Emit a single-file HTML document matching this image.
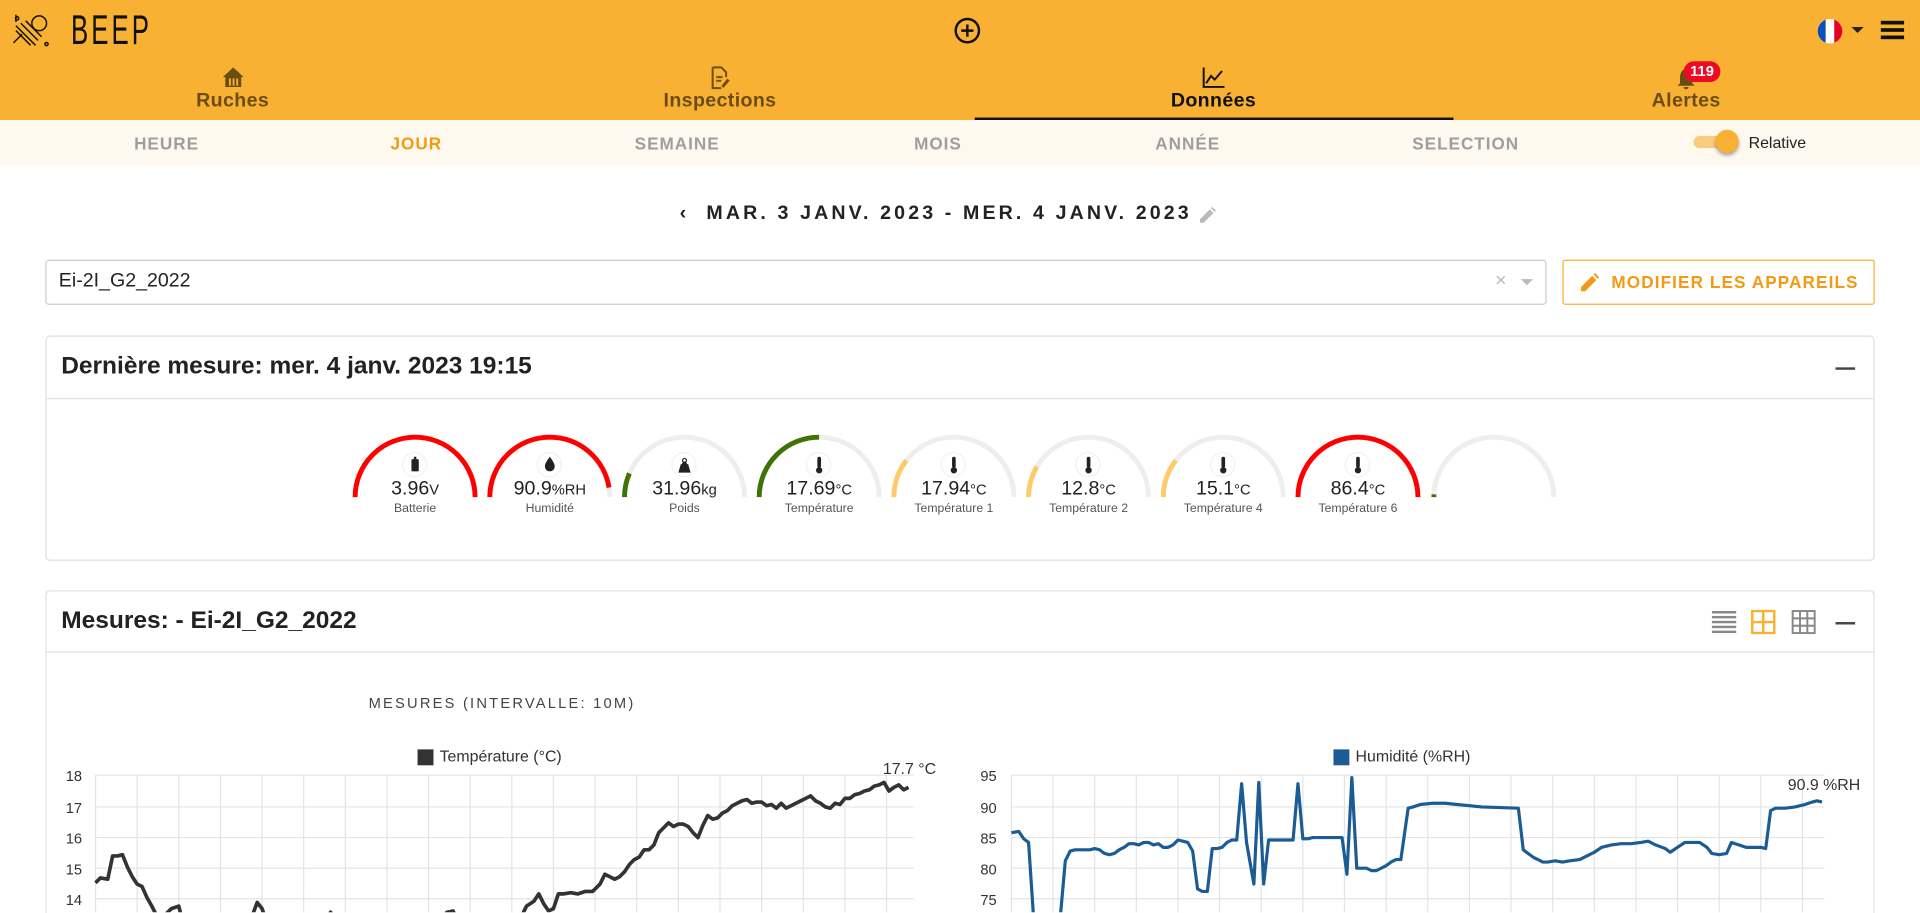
<!DOCTYPE html>
<html><head><meta charset="utf-8">
<style>
html,body{margin:0;padding:0;width:1920px;height:913px;overflow:hidden;background:#fff;font-family:"Liberation Sans",sans-serif;}
#w{position:absolute;left:0;top:0;width:1568px;height:745.6px;overflow:hidden;transform:scale(1.22449);transform-origin:0 0;}
.a{position:absolute;white-space:nowrap}
.hdr{position:absolute;left:0;top:0;width:1568px;height:98px;background:#F8B133}
.sub{position:absolute;left:0;top:98px;width:1568px;height:37px;background:#FEF9EE}
.tab{position:absolute;top:74px;font-size:16px;font-weight:bold;color:#6b4c12;letter-spacing:.3px;transform:translateX(-50%)}
.sn{position:absolute;top:109px;font-size:14px;font-weight:bold;color:#9e9e9e;letter-spacing:.8px;transform:translateX(-50%)}
.card{position:absolute;left:37px;width:1492px;border:1px solid #dedede;border-radius:4px;background:#fff}
.ct{position:absolute;left:12px;font-size:20px;font-weight:bold;color:#222}
.g{position:absolute;top:352px;width:110px;height:80px;transform:translateX(-55px);text-align:center}
.gv{position:absolute;top:39px;left:0;width:110px;font-size:16px;color:#222}
.gv small{font-size:12px}
.gl{position:absolute;top:58px;left:0;width:110px;font-size:10px;color:#555}
.gi{position:absolute;left:45px;top:18px;width:19px;height:19px;border-radius:50%;background:#fff;box-shadow:0 0 1.5px #ccc}
</style></head><body><div id="w">
<div class="hdr"></div>
<svg class="a" style="left:10px;top:10px" width="32" height="29" viewBox="0 0 32 29" fill="none" stroke="#111" stroke-width="1.2">
<circle cx="22" cy="9" r="6"/><circle cx="4" cy="5" r="1.3"/><circle cx="28" cy="26" r="1.3"/>
<path d="M3 11 L19 27 M3 15 L15 27 M7 9 L21 23 M11 7 L24 20 M1 25 L8 18 M3 2v6"/></svg>
<div class="a" style="left:58px;top:6px;font-size:34px;color:#111;transform:scaleX(.62);transform-origin:0 0;letter-spacing:4px;font-weight:normal">BEEP</div>
<svg class="a" style="left:779px;top:14px" width="22" height="22" viewBox="0 0 22 22" fill="none" stroke="#111" stroke-width="2"><circle cx="11" cy="11" r="9.5"/><path d="M11 6v10M6 11h10"/></svg>
<svg class="a" style="left:1484px;top:15px" width="21" height="21" viewBox="0 0 21 21"><clipPath id="fc"><circle cx="10.5" cy="10.5" r="10"/></clipPath><g clip-path="url(#fc)"><rect x="0" width="7" height="21" fill="#0b4fc1"/><rect x="7" width="7" height="21" fill="#fff"/><rect x="14" width="7" height="21" fill="#e4002b"/></g></svg>
<div class="a" style="left:1512px;top:22px;border-left:5px solid transparent;border-right:5px solid transparent;border-top:5px solid #222"></div>
<div class="a" style="left:1536px;top:17px;width:19px;height:3px;background:#111;box-shadow:0 6px 0 #111,0 12px 0 #111"></div>
<svg class="a" style="left:182px;top:55px" width="17" height="16" viewBox="0 0 17 16" fill="#6b4c12"><path d="M8.5 0L0 8h2v8h13V8h2z"/><path d="M5 9h1.5v6H5zM8 9h1.5v6H8zM11 9h1.5v6H11z" fill="#F8B133"/></svg>
<svg class="a" style="left:580px;top:54px" width="17" height="19" viewBox="0 0 17 19" fill="none" stroke="#6b4c12" stroke-width="1.6"><path d="M2 1h7l4 4v4M2 1v17h7M5 9h5M5 12h4"/><path d="M10 17l5-6" stroke-width="2.4"/></svg>
<svg class="a" style="left:982px;top:55px" width="18" height="17" viewBox="0 0 18 17" fill="none" stroke="#111" stroke-width="1.6"><path d="M1 0v16h17M3 13l4-6 3 3 6-7"/></svg>
<svg class="a" style="left:1369px;top:56px" width="16" height="17" viewBox="0 0 16 17" fill="#6b4c12"><path d="M8 0c-4 1-5 4-5 8v4L1 14h14l-2-2V8c0-4-1-7-5-8zM6 15h4a2 2 0 0 1-4 0z"/></svg>
<div class="a" style="left:1375px;top:50px;width:30px;height:17px;border-radius:9px;background:#ee0a24;color:#fff;font-size:12px;font-weight:bold;text-align:center;line-height:17px">119</div>
<div class="tab" style="left:190px">Ruches</div>
<div class="tab" style="left:588px">Inspections</div>
<div class="tab" style="left:991px;color:#111">Données</div>
<div class="tab" style="left:1377px">Alertes</div>
<div class="a" style="left:796px;top:96px;width:391px;height:2px;background:#111"></div>
<div class="sub"></div>
<div class="sn" style="left:136px">HEURE</div>
<div class="sn" style="left:340px;color:#f29a13">JOUR</div>
<div class="sn" style="left:553px">SEMAINE</div>
<div class="sn" style="left:766px">MOIS</div>
<div class="sn" style="left:970px">ANNÉE</div>
<div class="sn" style="left:1197px">SELECTION</div>
<div class="a" style="left:1383px;top:111px;width:30px;height:10px;border-radius:5px;background:#f9cd7f"></div>
<div class="a" style="left:1401px;top:106px;width:19px;height:19px;border-radius:50%;background:#F8B133;box-shadow:0 2px 3px rgba(0,0,0,.35)"></div>
<div class="a" style="left:1428px;top:109px;font-size:13px;color:#222">Relative</div>
<div class="a" style="left:555px;top:166px;font-size:16px;font-weight:bold;letter-spacing:2.55px;color:#222">‹&nbsp; MAR. 3 JANV. 2023 - MER. 4 JANV. 2023</div>
<svg class="a" style="left:980px;top:169px" width="13" height="13" viewBox="0 0 13 13" fill="#bbb"><path d="M0 10v3h3l8-8-3-3zM9 1l3 3 1-1-3-3z"/></svg>
<div class="a" style="left:37px;top:212px;width:1224px;height:35px;border:1px solid #ccc;border-radius:3px"></div>
<div class="a" style="left:48px;top:221px;font-size:16px;color:#222">Ei-2I_G2_2022</div>
<div class="a" style="left:1221px;top:221px;font-size:16px;color:#bbb">×</div>
<div class="a" style="left:1242px;top:228px;border-left:5px solid transparent;border-right:5px solid transparent;border-top:5px solid #bbb"></div>
<div class="a" style="left:1276px;top:212px;width:253px;height:35px;border:1px solid #F8B133;border-radius:2px"></div>
<svg class="a" style="left:1291px;top:223px" width="15" height="15" viewBox="0 0 13 13" fill="#f29a13"><path d="M0 10v3h3l8-8-3-3zM9 1l3 3 1-1-3-3z"/></svg>
<div class="a" style="left:1316px;top:222px;font-size:14px;font-weight:bold;letter-spacing:.9px;color:#f29a13">MODIFIER LES APPAREILS</div>
<div class="card" style="top:274px;height:182px">
<div class="ct" style="top:13px">Dernière mesure: mer. 4 janv. 2023 19:15</div>
<div class="a" style="left:0;top:50px;width:1492px;height:1px;background:#dedede"></div>
<div class="a" style="left:1461px;top:25px;width:16px;height:2px;background:#444"></div>
</div>
<svg class="a" style="left:0;top:340px" width="1568" height="80" viewBox="0 340 1568 80" fill="none" stroke-width="4">
<path d="M290 406A49 49 0 0 1 388 406" stroke="#eee"/><path d="M290 406A49 49 0 0 1 388 406" stroke="#f00"/>
<path d="M400 406A49 49 0 0 1 498 406" stroke="#eee"/><path d="M400 406A49 49 0 0 1 498 406" stroke="#f00" pathLength="100" stroke-dasharray="95 200"/>
<path d="M510 406A49 49 0 0 1 608 406" stroke="#eee"/><path d="M510 406A49 49 0 0 1 608 406" stroke="#3f7306" pathLength="100" stroke-dasharray="13 200"/>
<path d="M620 406A49 49 0 0 1 718 406" stroke="#eee"/><path d="M620 406A49 49 0 0 1 718 406" stroke="#3f7306" pathLength="100" stroke-dasharray="50 200"/>
<path d="M730 406A49 49 0 0 1 828 406" stroke="#eee"/><path d="M730 406A49 49 0 0 1 828 406" stroke="#fecb6a" pathLength="100" stroke-dasharray="21 200"/>
<path d="M840 406A49 49 0 0 1 938 406" stroke="#eee"/><path d="M840 406A49 49 0 0 1 938 406" stroke="#fecb6a" pathLength="100" stroke-dasharray="17 200"/>
<path d="M950 406A49 49 0 0 1 1048 406" stroke="#eee"/><path d="M950 406A49 49 0 0 1 1048 406" stroke="#fecb6a" pathLength="100" stroke-dasharray="21 200"/>
<path d="M1060 406A49 49 0 0 1 1158 406" stroke="#eee"/><path d="M1060 406A49 49 0 0 1 1158 406" stroke="#f00"/>
<path d="M1171 406A49 49 0 0 1 1269 406" stroke="#eee"/><path d="M1171 406A49 49 0 0 1 1269 406" stroke="#3f7306" pathLength="100" stroke-dasharray="1.5 200"/>
</svg>
<div class="g" style="left:339px"><div class="gi"></div><div class="gv">3.96<small>V</small></div><div class="gl">Batterie</div></div>
<div class="g" style="left:449px"><div class="gi"></div><div class="gv">90.9<small>%RH</small></div><div class="gl">Humidité</div></div>
<div class="g" style="left:559px"><div class="gi"></div><div class="gv">31.96<small>kg</small></div><div class="gl">Poids</div></div>
<div class="g" style="left:669px"><div class="gi"></div><div class="gv">17.69<small>°C</small></div><div class="gl">Température</div></div>
<div class="g" style="left:779px"><div class="gi"></div><div class="gv">17.94<small>°C</small></div><div class="gl">Température 1</div></div>
<div class="g" style="left:889px"><div class="gi"></div><div class="gv">12.8<small>°C</small></div><div class="gl">Température 2</div></div>
<div class="g" style="left:999px"><div class="gi"></div><div class="gv">15.1<small>°C</small></div><div class="gl">Température 4</div></div>
<div class="g" style="left:1109px"><div class="gi"></div><div class="gv">86.4<small>°C</small></div><div class="gl">Température 6</div></div>
<svg class="a" style="left:0;top:370px" width="1568" height="22" viewBox="0 370 1568 22" fill="#222">
<rect x="336" y="375" width="6" height="10" rx="1"/><rect x="338" y="373" width="2" height="2"/>
<path d="M449 373c-3 4-4 6-4 8a4 4 0 0 0 8 0c0-2-1-4-4-8z"/>
<path d="M554 386h10l-2-7h-6zM557 379a2 2 0 0 1 4 0" /><circle cx="559" cy="376" r="1.6" fill="none" stroke="#222"/>
<g id="th"><rect x="667.5" y="373" width="3" height="9" rx="1.5"/><circle cx="669" cy="384" r="2.6"/></g>
<use href="#th" x="110"/><use href="#th" x="220"/><use href="#th" x="330"/><use href="#th" x="440"/>
</svg>
<div class="card" style="top:482px;height:264px;border-bottom:none;border-radius:4px 4px 0 0">
<div class="ct" style="top:13px">Mesures: - Ei-2I_G2_2022</div>
<div class="a" style="left:0;top:49px;width:1492px;height:1px;background:#dedede"></div>
<div class="a" style="left:1461px;top:25px;width:16px;height:2px;background:#444"></div>
</div>
<svg class="a" style="left:1398px;top:498px" width="20" height="20" viewBox="0 0 20 20" fill="#888"><rect y="1" width="20" height="2"/><rect y="5" width="20" height="2"/><rect y="9" width="20" height="2"/><rect y="13" width="20" height="2"/><rect y="17" width="20" height="2"/></svg>
<svg class="a" style="left:1430px;top:498px" width="20" height="20" viewBox="0 0 20 20" fill="none" stroke="#F8B133" stroke-width="2"><rect x="1" y="1" width="18" height="18"/><path d="M10 1v18M1 10h18"/></svg>
<svg class="a" style="left:1463px;top:498px" width="20" height="20" viewBox="0 0 20 20" fill="none" stroke="#888" stroke-width="1.6"><rect x="1" y="1" width="18" height="18"/><path d="M7 1v18M13 1v18M1 7h18M1 13h18"/></svg>
<div class="a" style="left:301px;top:567px;font-size:12px;letter-spacing:1.8px;color:#444">MESURES (INTERVALLE: 10M)</div>
<svg class="a" style="left:0;top:600px" width="1568" height="145" viewBox="0 600 1568 145" font-family="Liberation Sans, sans-serif">
<g stroke="#e4e4e4" stroke-width="1">
<path d="M78 633H746M78 659H746M78 684H746M78 709H746M78 734H746"/>
<path d="M78 633V746M112 633V746M146 633V746M180 633V746M214 633V746M248 633V746M282 633V746M316 633V746M350 633V746M384 633V746M418 633V746M452 633V746M486 633V746M520 633V746M554 633V746M588 633V746M622 633V746M656 633V746M690 633V746M724 633V746"/>
<path d="M826 633H1490M826 659H1490M826 684H1490M826 709H1490M826 734H1490"/>
<path d="M826 633V746M860 633V746M894 633V746M928 633V746M962 633V746M996 633V746M1030 633V746M1064 633V746M1098 633V746M1132 633V746M1166 633V746M1200 633V746M1234 633V746M1268 633V746M1302 633V746M1336 633V746M1370 633V746M1404 633V746M1438 633V746M1472 633V746"/>
</g>
<g font-size="12" fill="#333" text-anchor="end"><text x="67" y="638">18</text><text x="67" y="664">17</text><text x="67" y="689">16</text><text x="67" y="714">15</text><text x="67" y="739">14</text>
<text x="814" y="638">95</text><text x="814" y="664">90</text><text x="814" y="689">85</text><text x="814" y="714">80</text><text x="814" y="739">75</text></g>
<rect x="341" y="612" width="13" height="13" fill="#333"/><text x="359" y="622" font-size="13" fill="#333">Température (°C)</text>
<rect x="1089" y="612" width="13" height="13" fill="#1c5c94"/><text x="1107" y="622" font-size="13" fill="#333">Humidité (%RH)</text>
<text x="721" y="632" font-size="13" fill="#333">17.7 °C</text>
<text x="1460" y="645" font-size="13" fill="#333">90.9 %RH</text>
<polyline fill="none" stroke="#333" stroke-width="3" stroke-linejoin="round" points="78,721 82,717 88,718 92,699 96,699 100,698 104,708 108,716 112,722 116,724 120,733 124,740 128,748 134,748 140,742 146,740 148,748 206,748 210,737 214,742 216,748 268,748 270,745 272,748 363,748 365,745 370,744 372,748 426,748 430,740 436,736 440,730 444,738 448,744 452,742 456,730 460,730 466,729 472,730 478,728 484,728 490,722 494,714 498,716 502,718 506,716 510,712 514,706 518,702 522,700 526,694 530,694 534,690 538,680 542,676 546,672 550,675 554,673 558,673 562,675 566,680 570,684 574,674 578,666 582,669 586,668 590,664 594,662 598,658 602,656 606,654 610,653 614,656 618,655 622,655 626,658 630,657 634,660 638,656 642,660 646,658 650,656 654,654 658,652 662,650 666,654 670,656 674,659 678,660 682,656 686,657 690,652 694,652 698,649 702,648 706,646 710,645 714,642 718,641 722,639 726,646 730,643 734,641 738,645 742,643"/>
<polyline fill="none" stroke="#1c5c94" stroke-width="2.6" stroke-linejoin="round" points="826,680 832,679 836,685 840,688 844,748 866,748 870,703 874,695 878,694 882,694 886,694 890,694 894,693 898,694 902,697 906,698 910,697 914,694 918,692 922,689 926,689 930,690 934,688 938,688 942,690 946,689 950,692 954,692 958,690 962,686 966,687 970,688 974,695 978,726 982,728 986,728 990,693 994,693 998,692 1002,688 1006,686 1010,686 1014,640 1018,688 1024,722 1028,639 1032,722 1036,686 1040,686 1044,686 1048,686 1052,686 1056,686 1060,640 1064,685 1068,685 1072,684 1080,684 1088,684 1096,684 1100,714 1104,635 1108,709 1116,709 1120,711 1124,711 1128,709 1132,707 1136,704 1140,702 1144,702 1150,660 1154,659 1160,657 1170,656 1180,656 1190,657 1200,658 1210,659 1240,660 1244,694 1248,697 1252,700 1256,702 1260,704 1264,704 1270,703 1276,704 1282,703 1290,702 1296,699 1302,696 1308,692 1316,690 1324,689 1332,689 1340,688 1346,687 1352,690 1360,693 1364,696 1370,692 1376,688 1382,688 1388,688 1394,692 1398,697 1404,698 1410,697 1414,688 1420,690 1426,692 1432,692 1438,692 1442,693 1446,662 1450,660 1458,660 1466,659 1474,657 1480,655 1484,654 1488,655"/>
</svg>
</div></body></html>
